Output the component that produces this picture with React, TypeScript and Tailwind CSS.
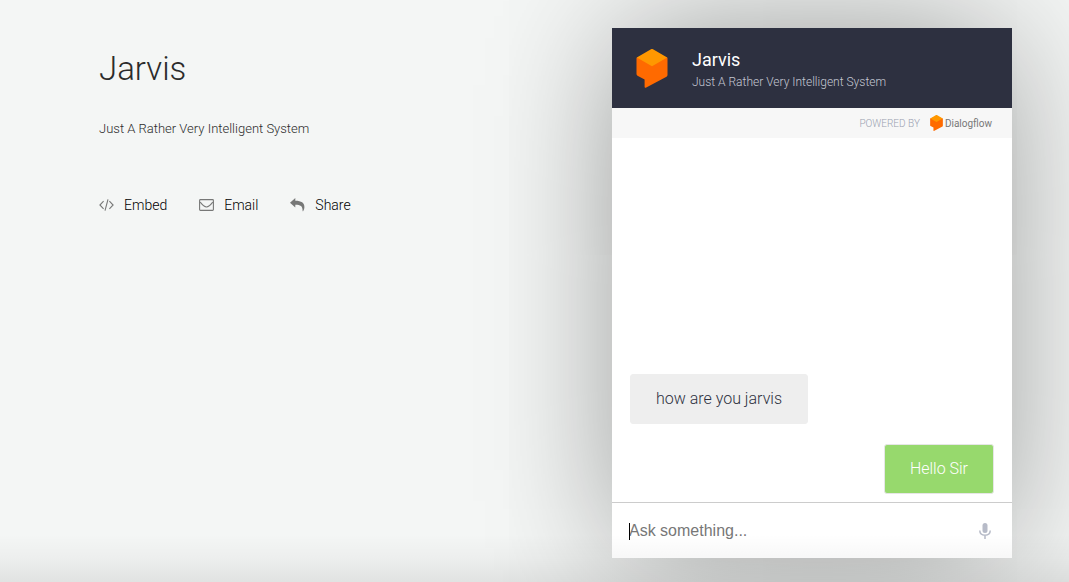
import { useState } from "react";

const BOT_NAME = 'Jarvis';
const BOT_DESCRIPTION = 'Just A Rather Very Intelligent System';

const messages = [
  { id: 1, from: 'user', text: 'how are you jarvis' },
  { id: 2, from: 'bot', text: 'Hello Sir' },
];

function EmbedIcon() {
  return (
    <svg width="15" height="14" viewBox="0 0 15 14" fill="none" stroke="#777877" strokeWidth="1.1" aria-hidden="true">
      <path d="M4.6 3.2 0.9 7l3.7 3.8M10.4 3.2 14.1 7l-3.7 3.8M9 1.4 6 12.6" />
    </svg>
  );
}

function EmailIcon() {
  return (
    <svg width="15" height="14" viewBox="0 0 15 14" fill="none" stroke="#777877" strokeWidth="1.1" aria-hidden="true">
      <rect x="0.6" y="1.6" width="13.8" height="10.8" rx="0.8" />
      <path d="M1.2 4.2c1.6 2 4.2 4.8 6.3 4.8s4.7-2.8 6.3-4.8" />
    </svg>
  );
}

function ShareIcon() {
  return (
    <svg width="15" height="14" viewBox="0 0 15 14" fill="#777877" aria-hidden="true">
      <path d="M0 4.7 5.3 0v2.8C11.5 2.9 14.4 4.8 14.4 9c0 1.500-.5 3-1.300 4.200-.2.300-.6.200-.5-.2C12.700 8 10.500 6.700 5.300 6.700v2.800z" />
    </svg>
  );
}

function CubeLogo({ className }: { className: string }) {
  return (
    <svg viewBox="0 0 31 39" className={className} aria-hidden="true">
      <path fill="#ff6a00" d="M0 8.800 15.500 3 31 8.800v17.200c0 .8-.4 1.400-1 1.800L9.300 38.700c-.6.300-1.200 0-1.200-.7v-7.500L1 26.700c-.6-.4-1-1-1-1.700z" />
      <path fill="#ff9800" d="M.3 8.400 14.500.3c.7-.4 1.300-.4 2 0l14.200 8.100-15.200 8.900z" />
    </svg>
  );
}

function MicIcon() {
  return (
    <svg width="12" height="16" viewBox="0 0 12 16" aria-hidden="true">
      <rect x="3.500" y="0" width="5" height="10" rx="2.500" fill="#b7bbc8" />
      <path d="M.8 7.500c0 3 2.300 4.700 5.200 4.700s5.200-1.700 5.200-4.700M6 12.200V16" fill="none" stroke="#b7bbc8" strokeWidth="1.500" />
    </svg>
  );
}

const actions = [
  { label: 'Embed', icon: EmbedIcon },
  { label: 'Email', icon: EmailIcon },
  { label: 'Share', icon: ShareIcon },
];

export default function App() {
  const [query, setQuery] = useState('');

  return (
    <div className="relative flex min-h-screen justify-between overflow-hidden bg-[#f4f6f5] pt-7 pr-[57px] pb-6 pl-[99px] font-['Roboto',sans-serif] font-light">
      <main className="pt-[17px] text-[#2b2b2b]">
        <h1 className="text-[33px] leading-12">{BOT_NAME}</h1>
        <p className="mt-[26px] text-[13px] leading-5">{BOT_DESCRIPTION}</p>
        <nav className="mt-14 flex gap-8">
          {actions.map(({ label, icon: Icon }) => (
            <a key={label} href="#" className="flex items-center gap-[10px] text-sm text-black">
              <Icon />
              {label}
            </a>
          ))}
        </nav>
      </main>

      <section className="flex w-[400px] shrink-0 flex-col bg-white shadow-[0_0_140px_-10px_rgba(0,0,0,0.42)]">
        <header className="flex h-20 items-center gap-6 bg-[#2d3040] px-6">
          <CubeLogo className="h-[39px] w-8" />
          <div className="pt-1">
            <h2 className="text-lg leading-6 font-normal text-white">{BOT_NAME}</h2>
            <p className="text-xs leading-5 text-[#c4c7d2]">{BOT_DESCRIPTION}</p>
          </div>
        </header>
        <div className="flex h-[30px] items-center justify-end gap-[10px] bg-[#f7f7f7] px-5">
          <span className="text-[10px] text-[#9a9fb0]">POWERED BY</span>
          <a href="#" className="flex items-center gap-[2px] text-[10px] font-normal text-[#777877]">
            <CubeLogo className="h-4 w-[13px]" />
            Dialogflow
          </a>
        </div>

        <div className="flex flex-1 flex-col justify-end gap-5 px-[18px] pb-2">
          {messages.map((message) => (
            <div
              key={message.id}
              className={
                message.from === 'user'
                  ? 'self-start rounded-[3px] border border-[#eeeeee] bg-[#eeeeee] px-[25px] py-3 text-base text-[#2d3040]'
                  : 'self-end rounded-[3px] border border-[#e6e6e6] bg-[#97d96d] px-[25px] py-3 text-base text-white'
              }
            >
              {message.text}
            </div>
          ))}
        </div>

        <form className="flex h-14 items-center border-t border-[#cccccc] pr-[21px] pl-[17px]" onSubmit={(e) => e.preventDefault()}>
          <div className="relative flex-1">
            <input
              aria-label="Ask something"
              placeholder="Ask something..."
              value={query}
              onChange={(e) => setQuery(e.target.value)}
              className="w-full font-['Liberation_Sans',sans-serif] text-base font-normal text-[#2d3040] placeholder-[#777777] caret-transparent outline-none"
            />
            <span className="absolute top-1 left-0 h-[17px] w-px bg-black" />
          </div>
          <button type="button" aria-label="Speak">
            <MicIcon />
          </button>
        </form>
      </section>

      <div className="pointer-events-none absolute inset-x-0 bottom-0 h-12 bg-linear-to-t from-black/8 via-black/3 to-transparent" />
    </div>
  );
}
